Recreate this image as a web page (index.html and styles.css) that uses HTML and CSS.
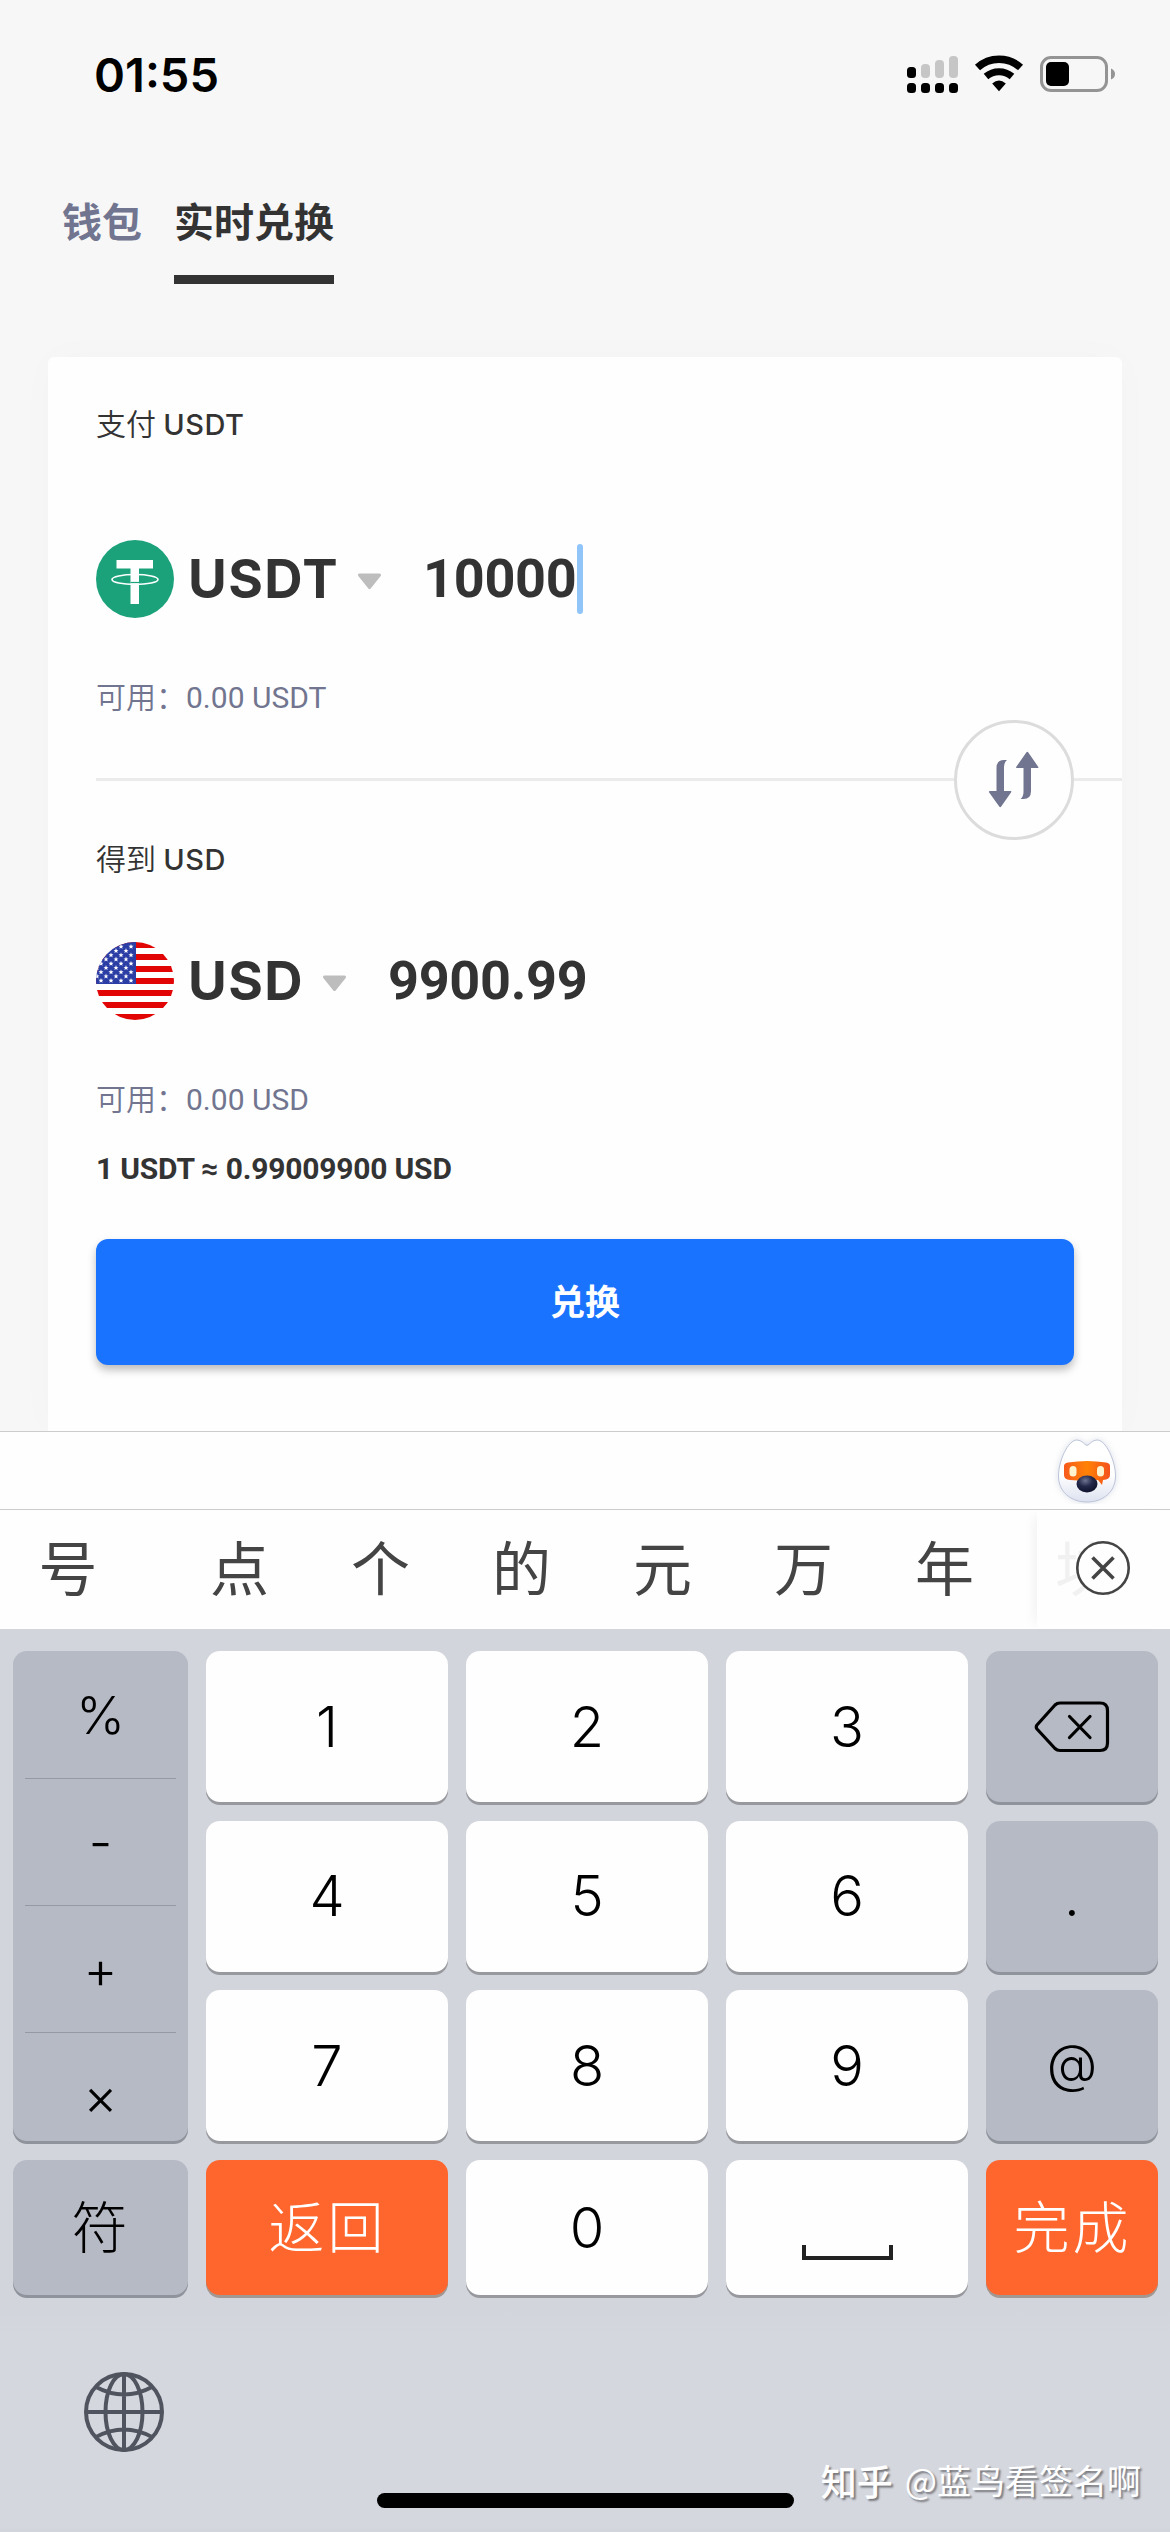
FILE: index.html
```html
<!DOCTYPE html>
<html lang="zh-CN">
<head>
<meta charset="utf-8">
<meta name="viewport" content="width=1170">
<title>实时兑换</title>
<link rel="stylesheet" href="styles.css">
</head>
<body>
<div class="phone">
  <header class="status">
    <span class="time">01:55</span>
    <svg class="status-icons" width="210" height="40" viewBox="0 0 210 40">
      <g fill="#c6c6c6"><rect x="15" y="10" width="9" height="14" rx="4"/><rect x="29" y="6" width="9" height="18" rx="4"/><rect x="43" y="2" width="9" height="22" rx="4"/></g>
      <g fill="#000"><rect x="1" y="13" width="9" height="11" rx="3.5"/><rect x="1" y="29" width="9" height="10" rx="3.5"/><rect x="15" y="29" width="9" height="10" rx="3.5"/><rect x="29" y="29" width="9" height="10" rx="3.5"/><rect x="43" y="29" width="9" height="10" rx="3.5"/></g>
      <path d="M71.500 13.500A32 32 0 0 1 114.500 13.500" fill="none" stroke="#000" stroke-width="7.500"/>
      <path d="M80 22.500A20 20 0 0 1 106 22.500" fill="none" stroke="#000" stroke-width="7"/>
      <path d="M93 37.200L86.200 29.500Q93 23.500 99.800 29.500Z" fill="#000"/>
      <rect x="135.500" y="3.500" width="65" height="33" rx="9.500" fill="none" stroke="#949494" stroke-width="3"/>
      <rect x="140" y="8" width="23" height="24" rx="5" fill="#000"/>
      <path d="M205 14.500Q209 16 209 20T205 25.500Z" fill="#949494"/>
    </svg>
  </header>

  <nav class="tabs">
    <a class="tab">钱包</a>
    <a class="tab active">实时兑换</a>
  </nav>

  <main class="card">
    <section class="side pay">
      <div class="label">支付 <span>USDT</span></div>
      <div class="row">
        <svg class="coin" viewBox="0 0 78 78">
          <circle cx="39" cy="39" r="39" fill="#1ba27a"/>
          <path d="M20.500 20H57V28.500H43V64H34.500V28.500H20.500Z" fill="#fff"/>
          <ellipse cx="39" cy="39.500" rx="23" ry="5" fill="none" stroke="#fff" stroke-width="1.600"/>
          <path d="M34.500 42.500H43" stroke="#1ba27a" stroke-width="1.200"/>
        </svg>
        <span class="code">USDT</span>
        <svg class="drop" viewBox="0 0 25 17"><path d="M2.500 2H22.500L12.500 14.500Z" fill="#bdbdbd" stroke="#bdbdbd" stroke-width="3" stroke-linejoin="round"/></svg>
        <span class="amount">10000</span><i class="cursor"></i>
      </div>
      <div class="avail">可用：<span>0.00 USDT</span></div>
    </section>
    <div class="divider">
      <button class="swap" aria-label="swap">
        <svg width="52" height="58" viewBox="0 0 52 58" fill="#71758f">
          <path d="M8.500 40V17Q8.500 9 16 9H19Q16 11.500 16 16V40H22.500Q24 40 23 41.500L13.200 55.500Q12.200 57 11.200 55.500L1.200 41.500Q.3 40 2 40Z"/>
          <path d="M43 17V40Q43 48 35.500 48H32.500Q35.500 45.500 35.500 41V17H29Q27.500 17 28.500 15.500L38.300 1.500Q39.300 0 40.300 1.500L50 15.500Q51 17 49.500 17Z"/>
        </svg>
      </button>
    </div>
    <section class="side get">
      <div class="label">得到 <span>USD</span></div>
      <div class="row">
        <svg class="coin" viewBox="0 0 78 78">
          <defs>
            <clipPath id="disc"><circle cx="39" cy="39" r="39"/></clipPath>
            <path id="s" d="M0-2.600L.7-.8 2.500-.8 1.100.4 1.600 2.300 0 1.200-1.600 2.300-1.100.4-2.500-.8-.7-.8Z"/>
            <g id="c4"><use href="#s" y="4.500"/><use href="#s" y="13"/><use href="#s" y="21.500"/><use href="#s" y="30"/><use href="#s" y="38.500"/></g>
            <g id="c3"><use href="#s" y="8.700"/><use href="#s" y="17.200"/><use href="#s" y="25.700"/><use href="#s" y="34.200"/></g>
          </defs>
          <g clip-path="url(#disc)">
            <rect width="78" height="78" fill="#fff"/>
            <path d="M0 3H78M0 15H78M0 27H78M0 39H78M0 51H78M0 63H78M0 75H78" stroke="#e10505" stroke-width="6"/>
            <rect width="40" height="42" fill="#2b3ea5"/>
            <g fill="#fff"><use href="#c4" x="35"/><use href="#c3" x="30"/><use href="#c4" x="25"/><use href="#c3" x="20"/><use href="#c4" x="15"/><use href="#c3" x="10"/><use href="#c4" x="5"/><use href="#c3" x="1"/></g>
          </g>
        </svg>
        <span class="code">USD</span>
        <svg class="drop" viewBox="0 0 25 17"><path d="M2.500 2H22.500L12.500 14.500Z" fill="#bdbdbd" stroke="#bdbdbd" stroke-width="3" stroke-linejoin="round"/></svg>
        <span class="amount">9900.99</span>
      </div>
      <div class="avail">可用：<span>0.00 USD</span></div>
      <div class="rate">1 USDT ≈ 0.99009900 USD</div>
      <button class="submit">兑换</button>
    </section>
  </main>

  <div class="toolbar">
    <svg width="70" height="72" viewBox="0 0 70 72">
      <defs>
        <linearGradient id="face" x1="0" y1="0" x2="0" y2="1"><stop offset=".55" stop-color="#fff"/><stop offset="1" stop-color="#dde2f0"/></linearGradient>
        <linearGradient id="visor"><stop offset="0" stop-color="#f75a1e"/><stop offset=".5" stop-color="#ff8204"/><stop offset="1" stop-color="#f4511c"/></linearGradient>
        <radialGradient id="nose" cx=".42" cy=".3" r=".7"><stop offset="0" stop-color="#6d7390"/><stop offset=".5" stop-color="#23284a"/><stop offset="1" stop-color="#10132c"/></radialGradient>
      </defs>
      <path class="mascot" d="M35 13.500C38 12.500 40 8 45 8C54 8 63.500 29 63.500 44C63.500 60 51 70 35 70C19 70 6.500 60 6.500 44C6.500 29 16 8 25 8C30 8 32 12.500 35 13.500Z" fill="url(#face)" stroke="#bcc4d8" stroke-width="1"/>
      <path d="M12 34Q12 31 16 30.500Q35 27.500 54 30.500Q58 31 58 34V43Q58 47.500 51 48L50 53L46 48Q35 49 18 48Q12 47.500 12 43Z" fill="url(#visor)"/>
      <rect x="17.500" y="34" width="7" height="10.500" rx="3.500" fill="#fff3cf"/><rect x="45" y="34" width="7" height="10.500" rx="3.500" fill="#fff3cf"/>
      <ellipse cx="35" cy="52" rx="10.500" ry="8.500" fill="url(#nose)"/>
    </svg>
  </div>

  <div class="candidates">
    <span class="first">号</span><span>点</span><span>个</span><span>的</span><span>元</span><span>万</span><span>年</span>
    <div class="more">
      <span class="ghost">块</span>
      <svg class="close" width="54" height="54" viewBox="0 0 54 54"><circle cx="27" cy="27" r="25.700" stroke="#444" stroke-width="2.600"/><path d="M16.500 16.500L37.500 37.500M37.500 16.500L16.500 37.500" stroke="#444" stroke-width="3.600"/></svg>
    </div>
  </div>

  <div class="keyboard">
    <div class="keys">
      <div class="key grey symbols"><span class="pct">%</span><span>-</span><span>+</span><span>×</span></div>
      <div class="key">1</div><div class="key">2</div><div class="key">3</div>
      <div class="key grey">
        <svg class="back" width="76" height="52" viewBox="0 0 76 52" fill="none" stroke="#000" stroke-width="3.200" stroke-linecap="round" stroke-linejoin="round"><path d="M26 2H66Q73.500 2 73.500 9.500V42Q73.500 49.500 66 49.500H26Q23 49.500 21 47.500L3 28Q1.500 26 3 24L21 4Q23 2 26 2Z"/><path d="M35.500 15.500L56 36.500M56 15.500L35.500 36.500"/></svg>
      </div>
      <div class="key">4</div><div class="key">5</div><div class="key">6</div><div class="key grey">.</div>
      <div class="key">7</div><div class="key">8</div><div class="key">9</div><div class="key grey at">@</div>
      <div class="key grey cn single">符</div>
      <div class="key orange cn">返回</div>
      <div class="key">0</div>
      <div class="key space"><i></i></div>
      <div class="key orange cn">完成</div>
    </div>
    <div class="bottom">
      <svg class="globe" width="80" height="80" viewBox="0 0 80 80" fill="none" stroke="#50545e" stroke-width="4"><circle cx="40" cy="40" r="38"/><ellipse cx="40" cy="40" rx="18.500" ry="38"/><path d="M40 2V78M2 40H78M12 15Q40 30 68 15M12 65Q40 50 68 65"/></svg>
      <div class="home"></div>
      <div class="watermark"><b>知乎</b><span>@蓝鸟看签名啊</span></div>
    </div>
  </div>
</div>
</body>
</html>
```
FILE: styles.css
```css
* { box-sizing: border-box; }
body { margin: 0; }
button { border: 0; padding: 0; margin: 0; }
svg { display: block; flex: none; }

.phone {
  width: 1170px;
  height: 2532px;
  overflow: hidden;
  display: flex;
  flex-direction: column;
  background: #f7f7f7;
  color: #333;
  font-family: Roboto, "Noto Sans CJK SC", sans-serif;
}

/* status bar */
.status {
  height: 194px;
  padding: 54px 54px 0 94px;
  display: flex;
  justify-content: space-between;
  align-items: flex-start;
}
.time {
  font: 560 47px/42px Inter, sans-serif;
  color: #000;
}

/* tabs */
.tabs {
  height: 163px;
  padding-left: 62px;
  display: flex;
  align-items: flex-start;
  gap: 32px;
}
.tab {
  height: 90px;
  font-size: 40px;
  line-height: 60px;
  font-weight: 700;
  color: #71758f;
}
.tab.active { color: #333; border-bottom: 9px solid #333; }

/* exchange card */
.card {
  width: 1074px;
  height: 1074px;
  margin-left: 48px;
  background: #fefefe;
  border-radius: 6px 6px 0 0;
  box-shadow: 0 0 40px rgba(0, 0, 0, .02);
  flex: none;
}
.side { padding: 0 48px; }
.pay { padding-top: 48px; height: 421px; }
.get { padding-top: 59px; }
.label, .avail, .rate { font-size: 30px; line-height: 40px; height: 40px; white-space: nowrap; }
.label { font-weight: 350; }
.label span { font: 450 29px/40px Inter, sans-serif; letter-spacing: .5px; }
.avail { margin-top: 60px; color: #71758f; font-weight: 350; }
.avail span { font-weight: 400; }
.row { height: 78px; display: flex; align-items: center; }
.pay .row { margin-top: 95px; }
.get .row { margin-top: 62px; }
.coin { width: 78px; height: 78px; }
.code, .amount { font-size: 54px; line-height: 78px; font-weight: 700; }
.code { margin: -1px 0 0 14px; font: 650 53px/78px Inter, sans-serif; letter-spacing: 1.4px; }
.amount { letter-spacing: -.3px; }
.drop { width: 25px; height: 17px; margin: 4px 41px 0 18px; }
.cursor { width: 6px; height: 70px; border-radius: 3px; background: #90c5fa; }
.divider {
  height: 3px;
  margin-left: 48px;
  padding-right: 48px;
  background: #ebebeb;
  display: flex;
  align-items: center;
  justify-content: flex-end;
}
.swap {
  width: 120px;
  height: 120px;
  flex: none;
  border-radius: 50%;
  border: 3px solid #dcdcdc;
  background: #fefefe;
  display: flex;
  align-items: center;
  justify-content: center;
}
.rate { margin-top: 29px; font-weight: 700; letter-spacing: -.2px; }
.submit {
  display: block;
  width: 978px;
  height: 126px;
  margin-top: 50px;
  padding-bottom: 4px;
  border-radius: 12px;
  background: #1a73ff;
  color: #fff;
  font: 700 35px/60px "Noto Sans CJK SC", sans-serif;
  box-shadow: 0 5px 8px rgba(0, 0, 0, .26);
}

/* keyboard accessory rows */
.toolbar {
  height: 78px;
  flex: none;
  border-top: 1px solid #ccc;
  background: #fefefe;
  padding-right: 48px;
  display: flex;
  justify-content: flex-end;
  z-index: 1;
}
.mascot { filter: drop-shadow(0 0 3px rgba(60, 80, 130, .18)); }
.candidates {
  height: 120px;
  flex: none;
  border-top: 1px solid #ccc;
  background: #fefefe;
  display: flex;
  color: #444;
  font: 400 59px/112px "Noto Sans CJK SC", sans-serif;
}
.candidates > span { width: 141px; text-align: center; flex: none; }
.candidates > .first { width: 136px; margin-right: 33px; }
.candidates > .more {
  flex: 1;
  margin-left: 22px;
  position: relative;
  box-shadow: -8px 0 12px -6px rgba(0, 0, 0, .06);
  padding: 31px 0 0 39px;
}
.ghost { position: absolute; left: 18px; top: 0; color: #f1f1f1; }
.close { position: relative; }
.close circle { fill: #fefefe; }

/* keyboard */
.keyboard { flex: 1; background: #d3d5dc; padding: 22px 13px 0; }
.keys {
  display: grid;
  grid-template-columns: 175px 242px 242px 242px 172px;
  grid-template-rows: 151px 151px 151px 135px;
  column-gap: 18px;
  row-gap: 18.700px;
}
.key {
  border-radius: 14px;
  background: #fefefe;
  box-shadow: 0 3px 0 #97999e;
  display: flex;
  align-items: center;
  justify-content: center;
  color: #000;
  font: 300 56px/1 Inter, sans-serif;
}
.key.grey { background: #b6bac4; box-shadow: 0 3px 0 #8f939b; }
.key.orange { background: #ff662e; color: #fff; box-shadow: 0 3px 0 #a39791; }
.key.cn {
  font: 300 56px/1 "Noto Sans CJK SC", sans-serif;
  letter-spacing: 3px;
  padding: 0 0 8px 1px;
}
.key.single { letter-spacing: 0; padding-right: 3px; }
.key.symbols {
  grid-row: 1 / 4;
  flex-direction: column;
  justify-content: flex-start;
  padding: 0 12px;
  font-size: 52px;
}
.symbols span { width: 100%; height: 127px; line-height: 128px; text-align: center; flex: none; }
.symbols span + span { border-top: 1px solid #9599a2; }
.symbols .pct { line-height: 129px; }
.key.at { font-size: 52px; padding-bottom: 4px; }
.space i { width: 91px; height: 15px; border: 4px solid #222; border-top: 0; margin-top: 50px; }

.bottom { position: relative; height: 224px; margin: 10px -13px 0; padding-top: 67px; background: linear-gradient(#d3d5dc, #d5d7df 30px); }
.globe { margin-left: 84px; }
.home { width: 417px; height: 15px; border-radius: 8px; background: #000; margin: 41px 0 0 377px; }
.watermark {
  position: absolute;
  right: 29px;
  bottom: 25px;
  display: flex;
  gap: 12px;
  color: #fff;
  font: 400 34px/48px "Noto Sans CJK SC", sans-serif;
  text-shadow: 2px 2px 2px rgba(0, 0, 0, .45);
  white-space: nowrap;
}
.watermark b { font-weight: 500; font-size: 36px; }
```
